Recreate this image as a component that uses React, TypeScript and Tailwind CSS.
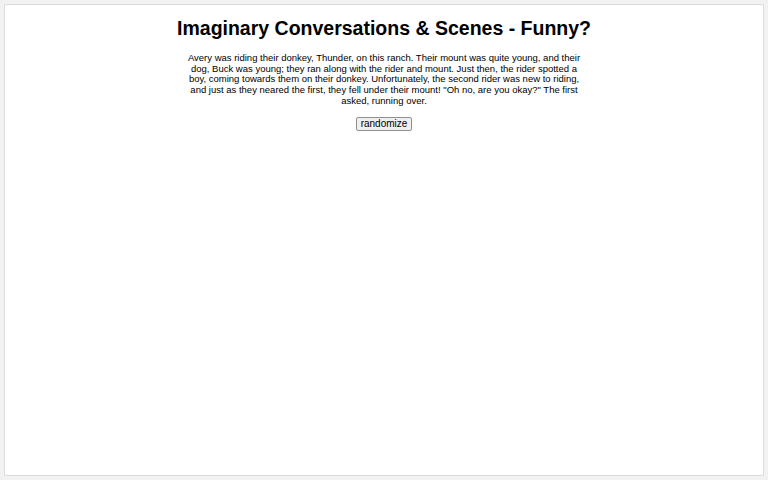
import React from "react";

const story =
  "Avery was riding their donkey, Thunder, on this ranch. Their mount was quite young, and their dog, Buck was young; they ran along with the rider and mount. Just then, the rider spotted a boy, coming towards them on their donkey. Unfortunately, the second rider was new to riding, and just as they neared the first, they fell under their mount! \"Oh no, are you okay?\" The first asked, running over.";

export default function App() {
  return (
    <div className="h-[480px] bg-[#f2f2f2] p-[4px] font-['Liberation_Sans',Arial,sans-serif] text-black">
      <div className="h-full border border-[#dcdcdc] bg-white flex flex-col items-center">
        <h1 className="mt-[11px] text-[19.5px] font-bold leading-[24px]">
          Imaginary Conversations &amp; Scenes - Funny?
        </h1>
        <p className="mt-[13px] w-[400px] text-center text-[9.5px] leading-[10.7px]">{story}</p>
        <button className="mt-[10px] px-[4px] h-[14px] text-[10px] leading-[12px] bg-[#efefef] border border-[#8f8f8f] rounded-[2px]">
          randomize
        </button>
      </div>
    </div>
  );
}
